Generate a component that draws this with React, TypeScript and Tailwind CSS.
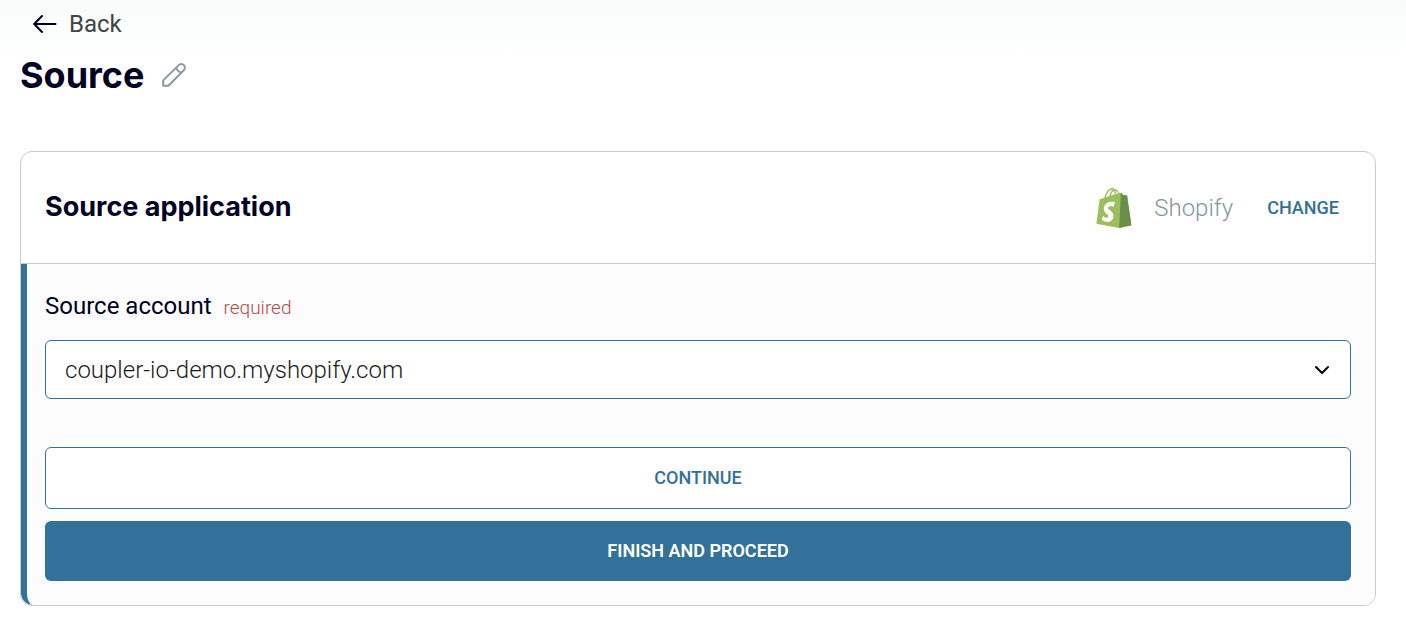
function BackIcon() {
  return (
    <svg width="24" height="20" viewBox="0 0 24 20" fill="none" stroke="currentColor" strokeWidth="2" strokeLinecap="round" strokeLinejoin="round" aria-hidden="true">
      <path d="M22.5 10H1.5M9 2 1.2 10 9 18" />
    </svg>
  );
}

function PencilIcon() {
  return (
    <svg width="24" height="24" viewBox="0 0 24 24" fill="none" stroke="currentColor" strokeWidth="2" strokeLinejoin="round" aria-hidden="true">
      <path d="M1.2 22.8v-5.4L16.7 2.1a3.5 3.5 0 0 1 5.1 0 3.5 3.5 0 0 1 0 5.1L6.4 22.8H1.2Z" />
      <path d="M14.2 4.6c.8 2.8 2.4 4.4 5.2 5.2" />
    </svg>
  );
}

function ShopifyLogo() {
  return (
    <svg width="36" height="40" viewBox="0 0 256 292" aria-hidden="true">
      <path
        fill="#9BBF5A"
        d="M223.774 57.34c-.201-1.46-1.48-2.268-2.537-2.357-1.055-.088-23.383-1.743-23.383-1.743s-15.507-15.395-17.209-17.099c-1.703-1.703-5.029-1.185-6.32-.805-.19.056-3.388 1.043-8.678 2.68-5.18-14.906-14.322-28.604-30.405-28.604-.444 0-.901.018-1.358.044C129.31 3.407 123.644.779 118.75.779c-37.465 0-55.364 46.835-60.976 70.635-14.558 4.511-24.9 7.718-26.221 8.133-8.126 2.549-8.383 2.805-9.45 10.462C21.3 95.806.038 260.235.038 260.235l165.678 31.042 89.77-19.42S223.973 58.8 223.774 57.34zM156.49 40.848l-14.019 4.339c.005-.988.01-1.96.01-3.023 0-9.264-1.286-16.723-3.349-22.636 8.287 1.04 13.806 10.469 17.358 21.32zm-27.638-19.483c2.304 5.773 3.802 14.058 3.802 25.238 0 .572-.005 1.095-.01 1.624-9.117 2.824-19.024 5.89-28.953 8.966 5.575-21.516 16.025-31.908 25.161-35.828zm-11.131-10.537c1.617 0 3.246.549 4.805 1.622-12.007 5.65-24.877 19.88-30.312 48.297l-22.886 7.088C75.694 46.16 90.81 10.828 117.72 10.828z"
      />
      <path
        fill="#688E48"
        d="M221.237 54.983c-1.055-.088-23.383-1.743-23.383-1.743s-15.507-15.395-17.209-17.099c-.637-.634-1.496-.959-2.394-1.099l-12.527 256.233 89.762-19.418S223.972 58.8 223.774 57.34c-.201-1.46-1.48-2.268-2.537-2.357"
      />
      <path
        fill="#FFF"
        d="M135.242 104.585l-11.069 32.926s-9.698-5.176-21.586-5.176c-17.428 0-18.305 10.937-18.305 13.693 0 15.038 39.2 20.8 39.2 56.024 0 27.713-17.577 45.558-41.277 45.558-28.44 0-42.984-17.7-42.984-17.7l7.615-25.16s14.95 12.835 27.565 12.835c8.243 0 11.596-6.49 11.596-11.232 0-19.616-32.16-20.491-32.16-52.724 0-27.129 19.472-53.382 58.778-53.382 15.145 0 22.627 4.338 22.627 4.338"
      />
    </svg>
  );
}

function ChevronIcon() {
  return (
    <svg className="pointer-events-none absolute right-[21px] top-6" width="16" height="12" viewBox="0 0 16 12" fill="none" stroke="#000" strokeWidth="2" strokeLinecap="round" strokeLinejoin="round" aria-hidden="true">
      <path d="m2 3 6 6 6-6" />
    </svg>
  );
}

const accounts = ["coupler-io-demo.myshopify.com"];

export default function App() {
  return (
    <main className="min-h-screen bg-linear-to-b from-[#f9fbfb] to-white to-10% pl-5 pr-[30px] pt-2 pb-6 font-['Roboto',sans-serif] text-[#000024]">
      <a href="#back" className="ml-[13px] inline-flex h-8 items-center gap-3 text-2xl">
        <BackIcon />
        <span className="text-[#3f4444]">Back</span>
      </a>

      <div className="mt-2.5 flex h-12 items-center gap-[18px]">
        <h1 className="font-['Inter',sans-serif] text-4xl font-bold">Source</h1>
        <button type="button" aria-label="Edit name" className="text-[#8a9ca2]">
          <PencilIcon />
        </button>
      </div>

      <section className="mt-[52px] overflow-hidden rounded-xl border border-[#c5cccd] bg-white">
        <header className="flex h-28 items-center justify-between border-b border-[#c5cccd] pl-6 pr-9">
          <h2 className="font-['Inter',sans-serif] text-[27px] font-bold">Source application</h2>
          <div className="flex items-center">
            <ShopifyLogo />
            <span className="ml-[22px] text-2xl font-light text-[#84979f]">Shopify</span>
            <button type="button" className="ml-[34px] text-lg font-medium text-[#32729a]">
              CHANGE
            </button>
          </div>
        </header>

        <form className="rounded-bl-xl border-l-6 border-[#32729a] bg-[#fcfcfc] pb-6 pl-[18px] pr-6 pt-6">
          <div className="flex h-9 items-baseline gap-3">
            <label htmlFor="account" className="text-2xl leading-9">
              Source account
            </label>
            <span className="text-[19px] font-light text-[#b94a45]">required</span>
          </div>

          <div className="relative mt-4">
            <select
              id="account"
              className="h-[59px] w-full appearance-none rounded-md border border-[#32729a] bg-white pl-[19px] pr-12 text-2xl font-light text-[#1c1c1c]"
            >
              {accounts.map((account) => (
                <option key={account}>{account}</option>
              ))}
            </select>
            <ChevronIcon />
          </div>

          <div className="mt-12 flex flex-col gap-3">
            <button type="button" className="h-[62px] rounded-md border border-[#32729a] bg-white text-lg font-medium text-[#32729a]">
              CONTINUE
            </button>
            <button type="submit" className="h-[60px] rounded-md bg-[#32729a] text-lg font-semibold text-white">
              FINISH AND PROCEED
            </button>
          </div>
        </form>
      </section>
    </main>
  );
}
